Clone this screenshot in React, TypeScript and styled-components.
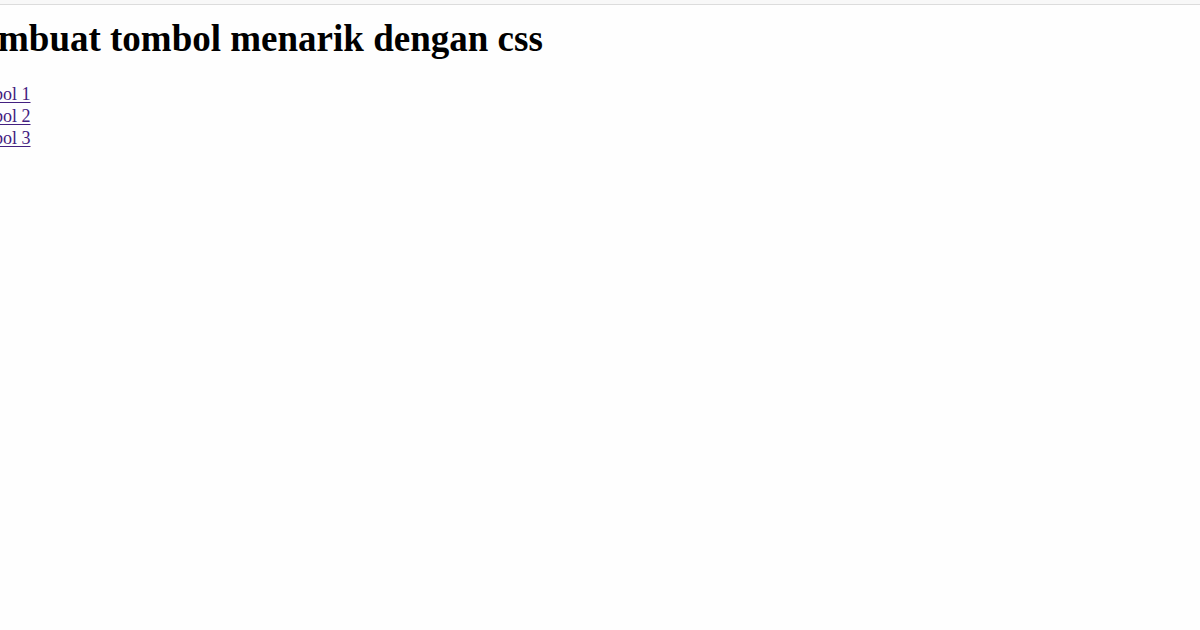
import React from 'react';
import styled, { createGlobalStyle } from 'styled-components';

const GlobalStyle = createGlobalStyle`
  body {
    background: #fefefe;
    color: #000;
    font-family: 'Liberation Serif', 'Times New Roman', serif;
    font-size: 18px;
    margin: 0;
    overflow-x: hidden;
  }
`;

const TopBar = styled.div`
  background: #f8f8f8;
  border-bottom: 1px solid #dcdcdc;
  height: 4px;
`;

const Content = styled.main`
  overflow: hidden;
  padding-top: 13px;
`;

const Title = styled.h1`
  font-size: 37px;
  line-height: 42px;
  margin: 0 0 23px -2px;
`;

const Links = styled.nav`
  align-items: flex-start;
  display: flex;
  flex-direction: column;
  margin-left: -6px;
`;

const ButtonLink = styled.a`
  color: #432080;
  line-height: 22px;
  text-decoration: underline;
  text-underline-offset: 2px;
`;

const links = ['bol 1', 'bol 2', 'bol 3'];

export default function App() {
  return (
    <>
      <GlobalStyle />
      <TopBar />
      <Content>
        <Title>mbuat tombol menarik dengan css</Title>
        <Links>
          {links.map((label) => (
            <ButtonLink key={label} href="#">
              {label}
            </ButtonLink>
          ))}
        </Links>
      </Content>
    </>
  );
}
